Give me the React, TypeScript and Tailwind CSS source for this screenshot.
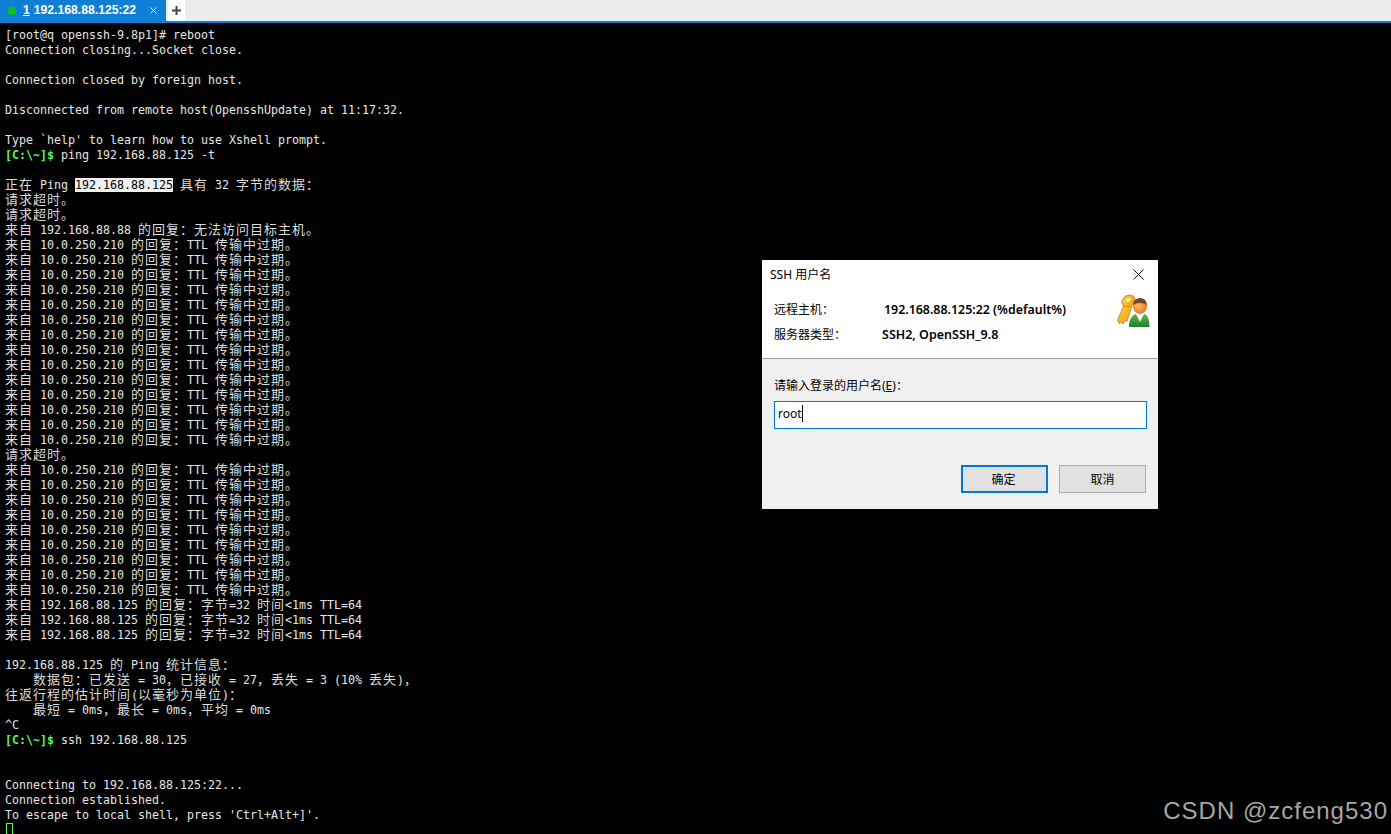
const TIMEOUT = "来自 10.0.250.210 的回复：TTL 传输中过期。";
const REPLY = "来自 192.168.88.125 的回复：字节=32 时间<1ms TTL=64";

const LINES: string[] = [
  "[root@q openssh-9.8p1]# reboot",
  "Connection closing...Socket close.",
  "",
  "Connection closed by foreign host.",
  "",
  "Disconnected from remote host(OpensshUpdate) at 11:17:32.",
  "",
  "Type `help' to learn how to use Xshell prompt.",
  "$ping 192.168.88.125 -t",
  "",
  "#正在 Ping |192.168.88.125| 具有 32 字节的数据：",
  "请求超时。",
  "请求超时。",
  "来自 192.168.88.88 的回复：无法访问目标主机。",
  ...Array(14).fill(TIMEOUT),
  "请求超时。",
  ...Array(9).fill(TIMEOUT),
  REPLY,
  REPLY,
  REPLY,
  "",
  "192.168.88.125 的 Ping 统计信息：",
  "    数据包：已发送 = 30，已接收 = 27，丢失 = 3 (10% 丢失)，",
  "往返行程的估计时间(以毫秒为单位)：",
  "    最短 = 0ms，最长 = 0ms，平均 = 0ms",
  "^C",
  "$ssh 192.168.88.125",
  "",
  "",
  "Connecting to 192.168.88.125:22...",
  "Connection established.",
  "To escape to local shell, press 'Ctrl+Alt+]'.",
];

// wide glyphs sit on two terminal cells: 13px + 1px tracking = 14px per glyph
function Mixed({ text }: { text: string }) {
  const runs = text.match(/[\u3000-\u9fff\uff00-\uffef]+|[^\u3000-\u9fff\uff00-\uffef]+/g) ?? [];
  return (
    <>
      {runs.map((run, i) =>
        /[\u3000-\u9fff\uff00-\uffef]/.test(run) ? (
          <span
            key={i}
            className="font-['Noto_Sans_CJK_SC',sans-serif] text-[13px] leading-[11px] tracking-[1px] text-[#dcdcdc]"
          >
            {run}
          </span>
        ) : (
          <span key={i}>{run}</span>
        ),
      )}
    </>
  );
}

function TermLine({ line }: { line: string }) {
  if (line.startsWith("$")) {
    return (
      <div className="h-[15px]">
        <span className="font-bold text-[#54fc54]">{"[C:\\~]$"}</span> {line.slice(1)}
      </div>
    );
  }
  if (line.startsWith("#")) {
    const [a, b, c] = line.slice(1).split("|");
    return (
      <div className="h-[15px]">
        <Mixed text={a} />
        <span className="bg-[#f0f0f0] text-black">{b}</span>
        <Mixed text={c} />
      </div>
    );
  }
  return (
    <div className="h-[15px]">
      <Mixed text={line} />
    </div>
  );
}

function KeyUserIcon() {
  return (
    <svg width="34" height="34" viewBox="0 0 34 34" className="mt-[6px] shrink-0">
      <defs>
        <linearGradient id="keyGold" x1="0" y1="0" x2="1" y2="1">
          <stop offset="0" stopColor="#ffd23f" />
          <stop offset="1" stopColor="#f09a12" />
        </linearGradient>
        <linearGradient id="shirt" x1="0" y1="0" x2="0" y2="1">
          <stop offset="0" stopColor="#62b844" />
          <stop offset="1" stopColor="#1f7d2e" />
        </linearGradient>
        <radialGradient id="face" cx="0.4" cy="0.45" r="0.7">
          <stop offset="0" stopColor="#ffb566" />
          <stop offset="1" stopColor="#e2701a" />
        </radialGradient>
      </defs>
      <path
        d="M9 9 L1.5 26 L3.5 30 L5.5 27.5 L7 30 L9 26.5 L11 27.5 L16 12"
        fill="url(#keyGold)"
        stroke="#cf7f0c"
        strokeWidth="0.8"
      />
      <ellipse
        cx="12.5"
        cy="7"
        rx="7"
        ry="5.5"
        transform="rotate(-30 12.5 7)"
        fill="url(#keyGold)"
        stroke="#cf7f0c"
        strokeWidth="0.8"
      />
      <ellipse cx="12.5" cy="6" rx="2.8" ry="1.5" transform="rotate(-30 12.5 6)" fill="#fff3b8" />
      <path d="M13 33 C13 24 17 20.5 20 20 L24 25 L28 20 C31 20.5 33.5 24 33.5 33 Z" fill="url(#shirt)" />
      <path d="M20 20 L24 28 L28 20 L24 22 Z" fill="#fff" />
      <ellipse cx="24" cy="12.5" rx="7" ry="7.5" fill="url(#face)" />
      <path d="M17 11 C17 6 21 4 24 4 C28 4 31.3 7 30.8 11 C28 8.5 21 8 17 11 Z" fill="#7a4a22" />
    </svg>
  );
}

function LoginDialog() {
  return (
    <div className="absolute left-[762px] top-[260px] flex h-[249px] w-[396px] flex-col bg-[#f0f0f0] font-['Noto_Sans','Noto_Sans_CJK_SC',sans-serif] text-[12px] text-black">
      <div className="flex h-[99px] flex-col border-b border-[#a0a0a0] bg-white">
        <div className="flex h-[28px] items-center justify-between pl-2 pr-[14px]">
          <span className="pt-[2px] leading-none">SSH 用户名</span>
          <svg width="11" height="11" viewBox="0 0 11 11">
            <path d="M0.5 0.5 L10.5 10.5 M10.5 0.5 L0.5 10.5" stroke="#111" strokeWidth="1" fill="none" />
          </svg>
        </div>
        <div className="flex items-start justify-between pl-3 pr-[8px]">
          <div className="flex flex-col gap-[7px] pt-[13px]">
            <div className="flex h-[18px] items-center">
              <span className="w-[110px]">远程主机：</span>
              <span className="text-[12.4px] font-semibold">192.168.88.125:22 (%default%)</span>
            </div>
            <div className="flex h-[18px] items-center">
              <span className="w-[108px]">服务器类型：</span>
              <span className="text-[12.5px] font-semibold">SSH2, OpenSSH_9.8</span>
            </div>
          </div>
          <KeyUserIcon />
        </div>
      </div>
      <div className="flex flex-1 flex-col px-3 pt-[18px]">
        <div className="h-[18px] leading-[18px]">
          请输入登录的用户名(<span className="underline">E</span>)：
        </div>
        <div className="mr-[-1px] mt-[6px] flex h-[28px] items-center border border-[#0078d7] bg-white pb-[3px] pl-[3px]">
          <span>root</span>
          <span className="h-[17px] w-px bg-black" />
        </div>
        <div className="mt-[36px] flex justify-end gap-[11px]">
          <button className="h-[28px] w-[87px] border-2 border-[#0078d7] bg-[#e1e1e1] pr-[2px] pt-px">确定</button>
          <button className="h-[28px] w-[87px] border border-[#adadad] bg-[#e1e1e1] pt-px">取消</button>
        </div>
      </div>
    </div>
  );
}

export default function App() {
  return (
    <div className="relative flex h-[834px] w-[1391px] flex-col overflow-hidden bg-black">
      <div className="flex h-[23px] shrink-0 border-b-2 border-[#0f7fd6] bg-[#ececec] font-['Liberation_Sans',sans-serif]">
        <div className="flex h-[21px] w-[166px] items-center bg-[#0f7fd6] pl-2 text-[12.2px] font-bold text-white">
          <span className="h-[8px] w-[8px] rounded-full bg-[#0fc40f]" />
          <span className="ml-[7px] underline">1</span>
          <span className="ml-1">192.168.88.125:22</span>
          <svg width="7" height="7" viewBox="0 0 7 7" className="ml-[14px]">
            <path d="M0.5 0.5 L6.5 6.5 M6.5 0.5 L0.5 6.5" stroke="#dcecf8" strokeWidth="1" fill="none" />
          </svg>
        </div>
        <div className="ml-[2px] flex h-[21px] w-[17px] items-center justify-center bg-white">
          <svg width="9" height="9" viewBox="0 0 9 9">
            <path d="M4.5 0 V9 M0 4.5 H9" stroke="#444" strokeWidth="2" fill="none" />
          </svg>
        </div>
      </div>
      <div className="whitespace-pre pl-[5px] pt-[5px] font-['DejaVu_Sans_Mono',monospace] text-[11.63px] leading-[15px] text-[#e6e6e6]">
        {LINES.map((line, i) => (
          <TermLine key={i} line={line} />
        ))}
        <div className="ml-px h-[13px] w-[7px] border border-[#54fc54]" />
      </div>
      <LoginDialog />
      <div className="absolute right-[3px] top-[796px] font-['Liberation_Sans',sans-serif] text-[24px] leading-[30px] tracking-[1px] text-[#a6a6a6]">
        CSDN @zcfeng530
      </div>
    </div>
  );
}
